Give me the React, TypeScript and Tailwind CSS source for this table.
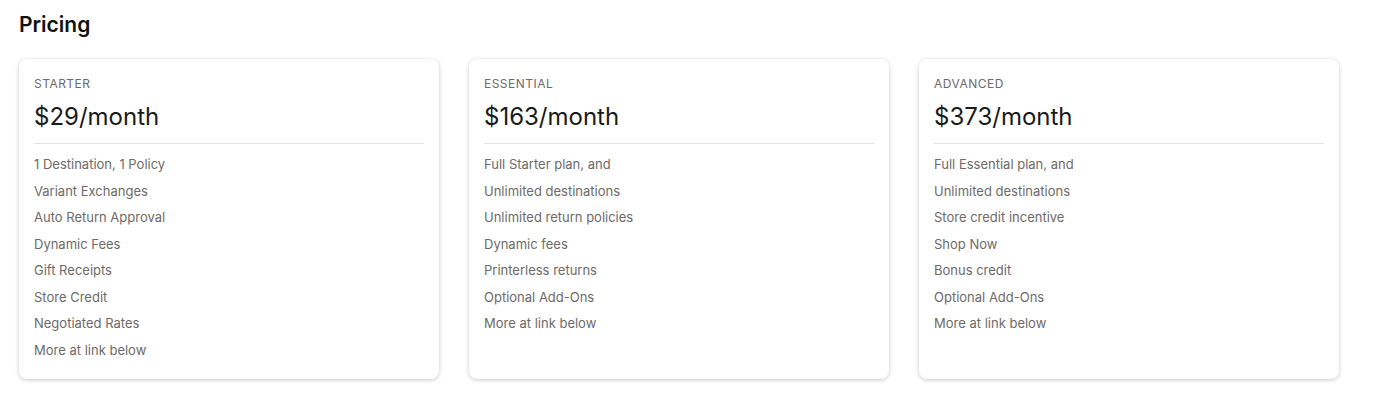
import React from "react";

const plans = [
  {
    name: "STARTER",
    price: "$29/month",
    items: [
      "1 Destination, 1 Policy",
      "Variant Exchanges",
      "Auto Return Approval",
      "Dynamic Fees",
      "Gift Receipts",
      "Store Credit",
      "Negotiated Rates",
      "More at link below",
    ],
  },
  {
    name: "ESSENTIAL",
    price: "$163/month",
    items: [
      "Full Starter plan, and",
      "Unlimited destinations",
      "Unlimited return policies",
      "Dynamic fees",
      "Printerless returns",
      "Optional Add-Ons",
      "More at link below",
    ],
  },
  {
    name: "ADVANCED",
    price: "$373/month",
    items: [
      "Full Essential plan, and",
      "Unlimited destinations",
      "Store credit incentive",
      "Shop Now",
      "Bonus credit",
      "Optional Add-Ons",
      "More at link below",
    ],
  },
];

export default function App() {
  return (
    <div
      className="min-h-[395px] bg-white pl-[19px] pt-[11px]"
      style={{ fontFamily: "Inter, 'Noto Sans', sans-serif" }}
    >
      <h1 className="text-[21px] font-semibold leading-[28px] text-[#111]">Pricing</h1>
      <div className="mt-[20px] flex items-start gap-[30px]">
        {plans.map((p) => (
          <div
            key={p.name}
            className="h-[320px] w-[420px] rounded-[8px] bg-white px-[15px] pt-[16px] shadow-[0_1px_4px_rgba(0,0,0,0.22)]"
          >
            <div className="text-[12px] leading-[18px] tracking-[0.04em] text-[#6e6a68]">{p.name}</div>
            <div className="mt-[8px] text-[24px] leading-[32px] text-[#1a1a1a]">{p.price}</div>
            <div className="mt-[10px] h-px bg-[#e2e2e2]" />
            <ul className="mt-[7px]">
              {p.items.map((it) => (
                <li key={it} className="text-[13px] leading-[26.5px] text-[#6e6a68]">
                  {it}
                </li>
              ))}
            </ul>
          </div>
        ))}
      </div>
    </div>
  );
}
